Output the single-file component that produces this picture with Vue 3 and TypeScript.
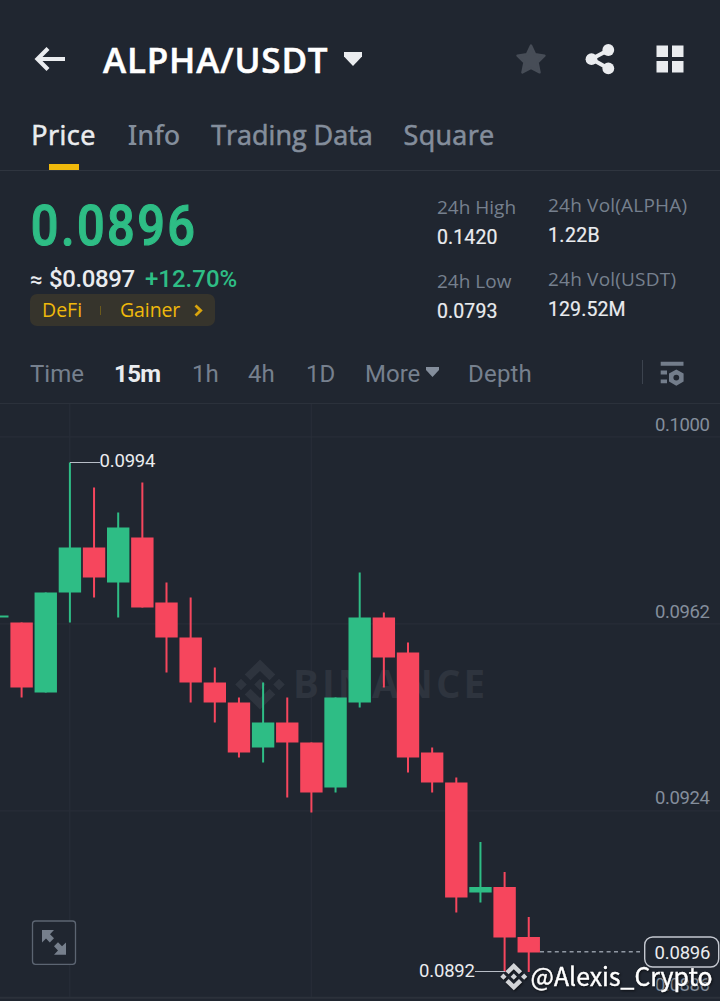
<script setup lang="ts">
interface Candle {
  x: number
  top: number
  bottom: number
  high: number
  low: number
  up: boolean
}

const tabs = [
  { label: 'Price', cls: 'price active' },
  { label: 'Info', cls: 'info' },
  { label: 'Trading Data', cls: 'trading' },
  { label: 'Square', cls: 'square' },
]

const stats = [
  { label: '24h High', value: '0.1420', cls: 'high' },
  { label: '24h Vol(ALPHA)', value: '1.22B', cls: 'vola' },
  { label: '24h Low', value: '0.0793', cls: 'low' },
  { label: '24h Vol(USDT)', value: '129.52M', cls: 'volu' },
]

const rows: [number, number, number, number, boolean][] = [
  [622.5, 687.5, 622.5, 697.5, false],
  [592.5, 692.5, 592.5, 692.5, true],
  [547.5, 592.5, 462.5, 622.5, true],
  [547.5, 577.5, 487.5, 597.5, false],
  [527.5, 582.5, 512.5, 617.5, true],
  [537.5, 607.5, 482.5, 607.5, false],
  [602.5, 637.5, 582.5, 672.5, false],
  [637.5, 682.5, 597.5, 702.5, false],
  [682.5, 702.5, 667.5, 722.5, false],
  [702.5, 752.5, 697.5, 757.5, false],
  [722.5, 747.5, 682.5, 762.5, true],
  [722.5, 742.5, 697.5, 797.5, false],
  [742.5, 792.5, 742.5, 812.5, false],
  [697.5, 787.5, 697.5, 792.5, true],
  [617.5, 702.5, 572.5, 707.5, true],
  [617.5, 657.5, 612.5, 687.5, false],
  [652.5, 757.5, 642.5, 772.5, false],
  [752.5, 782.5, 747.5, 792.5, false],
  [782.5, 897.5, 777.5, 912.5, false],
  [887, 892.5, 842, 902.5, true],
  [887, 937.5, 872, 972, false],
  [937, 952.5, 917, 972, false],
]

const candles: Candle[] = rows.map(([top, bottom, high, low, up], i) => ({
  x: 21.6 + i * 24.15,
  top,
  bottom,
  high,
  low,
  up,
}))
</script>

<template>
  <div class="screen">
    <header class="header">
      <svg class="back" width="32" height="26" viewBox="0 0 32 26">
        <path d="M14 2.5 3.5 13 14 23.5M4 13H31" fill="none" stroke="#eaecef" stroke-width="4.2" />
      </svg>
      <h1 class="pair">ALPHA/USDT</h1>
      <svg class="caret" width="18" height="14" viewBox="0 0 18 14">
        <path d="M0 0H18V4.5L9 14 0 4.5Z" fill="#eaecef" />
      </svg>
      <div class="actions">
        <svg width="32" height="32" viewBox="0 0 32 32">
          <path d="M16 2.5 20.1 11.2 29.5 12.6 22.6 19.4 24.6 29.4 16 25 7.4 29.4 9.4 19.4 2.5 12.6 11.9 11.2Z" fill="#474d57" stroke="#474d57" stroke-width="2.4" stroke-linejoin="round" />
        </svg>
        <svg width="30" height="32" viewBox="0 0 30 32">
          <path d="M23.5 7 6.5 16 23.5 25.5" fill="none" stroke="#eaecef" stroke-width="4" />
          <circle cx="6.5" cy="16.2" r="5.9" fill="#eaecef" />
          <circle cx="23.3" cy="7" r="5.9" fill="#eaecef" />
          <circle cx="23.3" cy="25.4" r="5.9" fill="#eaecef" />
        </svg>
        <svg width="28" height="28" viewBox="0 0 28 28">
          <path d="M.5.5H12V12H.5ZM16 .5H27.5V12H16ZM.5 16H12V27.5H.5ZM16 16H27.5V27.5H16Z" fill="#eaecef" />
        </svg>
      </div>
    </header>

    <nav class="tabs">
      <div v-for="tab in tabs" :key="tab.label" class="tab" :class="tab.cls">{{ tab.label }}</div>
    </nav>

    <section class="summary">
      <div class="quote">
        <div class="last">0.0896</div>
        <div class="fiat">
          <span class="approx">≈</span><span class="usd">$0.0897</span><span class="change">+12.70%</span>
        </div>
        <div class="tags">
          <span class="defi">DeFi</span><i class="split" /><span class="gainer">Gainer</span>
          <svg width="9" height="13" viewBox="0 0 9 13"><path d="M1.5 1.5 6.7 6.5 1.5 11.5" fill="none" stroke="#d9a40d" stroke-width="2.8" /></svg>
        </div>
      </div>
      <dl class="stats">
        <div v-for="s in stats" :key="s.label" class="stat" :class="s.cls">
          <dt>{{ s.label }}</dt>
          <dd>{{ s.value }}</dd>
        </div>
      </dl>
    </section>

    <nav class="periods">
      <span class="p-time">Time</span>
      <span class="p-15 on">15m</span>
      <span class="p-1h">1h</span>
      <span class="p-4h">4h</span>
      <span class="p-1d">1D</span>
      <span class="p-more">More</span>
      <svg class="more-caret" width="13" height="10" viewBox="0 0 13 10"><path d="M0 0H13V3L6.5 10 0 3Z" fill="#848e9c" /></svg>
      <span class="p-depth">Depth</span>
      <i class="rule" />
      <svg class="settings" width="24" height="25" viewBox="0 0 24 25">
        <path d="M.7.7H23.5V4.8H.7ZM.7 9.5H7V13.5H.7ZM.7 18.5H7V22.3H.7Z" fill="#737d8b" />
        <path d="M16.3 8.5 23.6 12.6V20.6L16.3 24.7 9 20.6V12.6ZM16.3 13.7A2.9 2.9 0 1 0 16.3 19.5 2.9 2.9 0 1 0 16.3 13.7Z" fill="#737d8b" fill-rule="evenodd" />
      </svg>
    </nav>

    <svg class="chart" width="720" height="597" viewBox="0 404 720 597">
      <g stroke="#272d37" stroke-width="1.3">
        <path d="M0 436.8H720M0 623.8H720M0 810.8H720M69.8 404V997M311.3 404V997" fill="none" />
      </g>
      <path d="M0 997.7H720" stroke="#2b313a" stroke-width="2" />

      <g fill="#2e343e">
        <path transform="translate(260 684.5)" d="M0-25 15.3-10 9.5-4.3 0-13.6-9.5-4.3-15.3-10ZM0 25 15.3 10 9.5 4.3 0 13.6-9.5 4.3-15.3 10ZM0-5.8 5.8 0 0 5.8-5.8 0ZM-19-5.8-13.2 0-19 5.8-24.8 0ZM19-5.8 24.8 0 19 5.8 13.2 0Z" />
        <text class="brand" x="293" y="698.3" textLength="192">BINANCE</text>
      </g>

      <path d="M0 616.5H8.5" stroke="#2ebd85" stroke-width="2" />
      <g v-for="c in candles" :key="c.x" :fill="c.up ? '#2ebd85' : '#f6465d'">
        <rect :x="c.x - 1" :y="c.high" width="2" :height="c.low - c.high" />
        <rect :x="c.x - 11.2" :y="c.top" width="22.4" :height="c.bottom - c.top" />
      </g>

      <path d="M70 462.5H100M475 971.5H505" stroke="#b7bdc6" stroke-width="1.2" />
      <text class="mark" x="99.5" y="467.3" textLength="56">0.0994</text>
      <text class="mark" x="419" y="977.3" textLength="56">0.0892</text>

      <g class="axis">
        <text x="655" y="431.3" textLength="55">0.1000</text>
        <text x="655" y="618.3" textLength="55">0.0962</text>
        <text x="655" y="804.3" textLength="55">0.0924</text>
        <text x="655" y="991.3" textLength="55">0.0886</text>
      </g>

      <path d="M540 951.8H640" stroke="#9098a3" stroke-width="1.4" stroke-dasharray="4 3.4" />
      <rect x="644.7" y="937" width="74" height="30" rx="8" fill="#202630" stroke="#c3c7cf" stroke-width="1.4" />
      <text class="mark" x="654.5" y="959.3" textLength="56">0.0896</text>

      <rect x="32.5" y="921" width="43" height="43.3" rx="3" fill="#202630" stroke="#5c6572" stroke-width="1.3" />
      <path d="M42 930H54L50 934.2 54 938.3 49.8 942.6 46 938.6 42 942.5ZM66 954.7H54L58 950.6 54 946.3 58 942.2 62 946.3 66 942.4Z" fill="#767f8c" />

      <g class="signature">
        <path transform="translate(513.8 976.7) scale(.545)" fill="#d2d4d7" d="M0-25 15.3-10 9.5-4.3 0-13.6-9.5-4.3-15.3-10ZM0 25 15.3 10 9.5 4.3 0 13.6-9.5 4.3-15.3 10ZM0-5.8 5.8 0 0 5.8-5.8 0ZM-19-5.8-13.2 0-19 5.8-24.8 0ZM19-5.8 24.8 0 19 5.8 13.2 0Z" />
        <text x="530.5" y="986" textLength="182" lengthAdjust="spacingAndGlyphs">@Alexis_Crypto</text>
      </g>
    </svg>
  </div>
</template>

<style>
body {
  background: #202630;
}
</style>

<style scoped>
.screen {
  width: 720px;
  height: 1001px;
  overflow: hidden;
  background: #202630;
  color: #eaecef;
  font-family: Roboto, 'Open Sans', sans-serif;
}
svg {
  display: block;
  flex: none;
}
.header {
  display: flex;
  align-items: center;
  height: 117px;
  padding: 0 36px 0 34px;
  box-sizing: border-box;
}
.back {
  width: 32px;
}
.pair {
  width: 224px;
  margin: 2px 0 0 37px;
  font: 600 35px/44px 'Open Sans', sans-serif;
  white-space: nowrap;
  letter-spacing: 0.8px;
  -webkit-text-stroke: 0.5px #fff;
  color: #fff;
}
.caret {
  margin-left: 17px;
}
.actions {
  display: flex;
  align-items: center;
  margin-left: auto;
}
.actions svg + svg {
  margin-left: 38px;
}
.actions svg:last-child {
  margin-left: 41px;
}
.tabs {
  display: flex;
  height: 54px;
  padding-left: 30px;
  box-sizing: border-box;
  border-bottom: 1px solid #2f353f;
}
.tab {
  display: flex;
  flex-direction: column;
  align-items: center;
  height: 53px;
  padding-top: 1px;
  box-sizing: border-box;
  font: 400 27px/34px 'Open Sans', sans-serif;
  color: #848e9c;
  white-space: nowrap;
  -webkit-text-stroke: 0.6px currentColor;
}
.price { width: 67px; margin-right: 30px; letter-spacing: 0.5px; }
.info { width: 54px; margin-right: 30px; font-family: 'Noto Sans', sans-serif; font-weight: 500; -webkit-text-stroke: 0; }
.trading { width: 162px; margin-right: 30px; }
.square { width: 92px; letter-spacing: 0.3px; }
.active { color: #eaecef; }
.active::after {
  content: '';
  width: 30px;
  height: 6px;
  margin-top: 12px;
  background: #f0b90b;
}
.summary {
  display: flex;
  height: 174px;
}
.quote {
  width: 437px;
  padding-left: 30px;
  box-sizing: border-box;
}
.last {
  width: 180px;
  height: 66px;
  margin-top: 22px;
  padding-left: 1px;
  font-size: 56px;
  font-weight: 500;
  line-height: 66px;
  letter-spacing: 2.8px;
  transform: scaleX(0.87);
  transform-origin: left;
  -webkit-text-stroke: 1.2px #2ebd85;
  color: #2ebd85;
}
.fiat {
  display: flex;
  align-items: center;
  height: 34px;
  margin-top: 3px;
  font-size: 24px;
  font-weight: 500;
}
.approx { width: 19px; font-size: 22px; }
.usd { width: 96px; letter-spacing: -0.4px; }
.change { color: #2ebd85; }
.tags {
  display: flex;
  align-items: center;
  width: 185px;
  height: 32px;
  margin-top: -2px;
  padding-left: 12px;
  box-sizing: border-box;
  border-radius: 7px;
  background: #36342c;
  color: #f0b90b;
  font: 400 19.5px/32px 'Open Sans', sans-serif;
}
.defi { width: 58px; }
.split { width: 1px; height: 9px; background: #6c5a1b; }
.gainer { width: 74px; margin-left: 19px; letter-spacing: -0.1px; }
.stats {
  display: grid;
  grid-template-columns: 111px 150px;
  grid-template-rows: 74px 74px;
  margin: 22px 0 0;
}
.stat { white-space: nowrap; }
.high, .low { padding-top: 2px; }
dt {
  font: 400 19px/24px 'Open Sans', sans-serif;
  color: #76808e;
}
.vola dt, .volu dt { letter-spacing: 0.2px; }
dd {
  margin: 7px 0 0;
  font-size: 19.5px;
  line-height: 24px;
  letter-spacing: 0.1px;
  -webkit-text-stroke: 0.2px currentColor;
}
.vola dd { letter-spacing: 0.4px; }
.periods {
  display: flex;
  align-items: center;
  height: 59px;
  padding-left: 30px;
  box-sizing: border-box;
  border-bottom: 1px solid #2b313b;
  font-size: 24px;
  color: #76808e;
}
.on { color: #eaecef; font-weight: 700; }
.p-time { width: 84px; }
.p-15 { width: 78px; letter-spacing: -0.6px; }
.p-1h { width: 56px; }
.p-4h { width: 58px; }
.p-1d { width: 59px; }
.p-more { width: 61px; }
.more-caret { margin-top: -4px; }
.p-depth { width: 64px; margin-left: 29px; letter-spacing: 0.2px; }
.rule { width: 1px; height: 24px; margin: -4px 0 0 110px; background: #3c434e; }
.settings { margin: -2px 0 0 17px; }
.brand { font: 700 38.5px 'Open Sans', sans-serif; }
.mark { font: 400 18.5px Roboto, sans-serif; fill: #eaecef; }
.axis { font: 400 18.5px Roboto, sans-serif; fill: #848e9c; }
.signature {
  font: 400 25px 'Noto Sans CJK SC', sans-serif;
  fill: #fff;
  filter: drop-shadow(1px 1px 1px rgba(0, 0, 0, 0.6));
}
.signature text {
  stroke: #fff;
  stroke-width: 0.4px;
}
</style>
